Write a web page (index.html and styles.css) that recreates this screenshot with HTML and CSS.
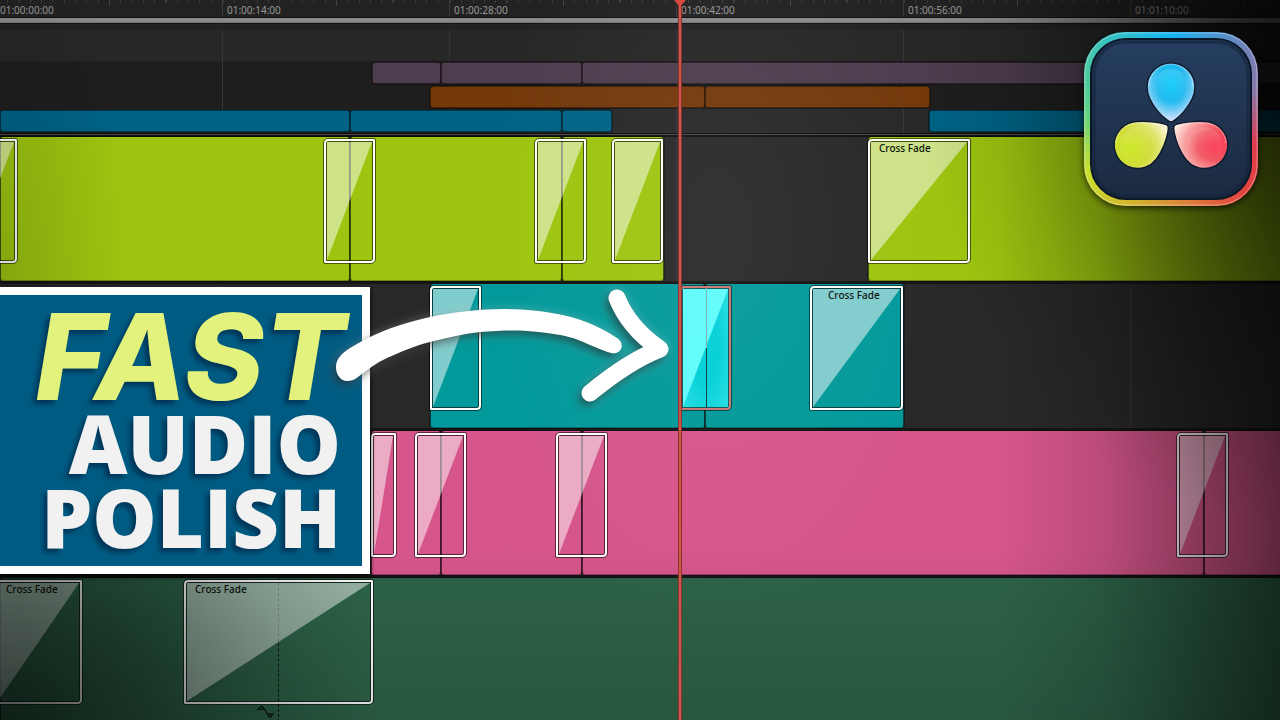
FILE: index.html
```html
<!DOCTYPE html>
<html lang="en">
<head>
  <meta charset="UTF-8">
  <meta name="viewport" content="width=device-width, initial-scale=1.0">
  <title>Fast Audio Polish</title>
  <link rel="stylesheet" href="styles.css">
</head>
<body>

<main class="timeline">

  <header class="ruler">
    <time>01:00:00:00</time>
    <time>01:00:14:00</time>
    <time>01:00:28:00</time>
    <time>01:00:42:00</time>
    <time>01:00:56:00</time>
    <time>01:01:10:00</time>
  </header>
  <div class="scrollbar"></div>

  <!-- Video tracks, --w is the clip length in timeline units -->
  <section class="video">
    <div class="track spacer"></div>
    <div class="track dark">
      <div class="gap" style="--w:372"></div>
      <div class="clip purple" style="--w:69"></div>
      <div class="clip purple" style="--w:141"></div>
      <div class="clip purple" style="--w:720"></div>
    </div>
    <div class="track dark">
      <div class="gap" style="--w:430"></div>
      <div class="clip orange" style="--w:275"></div>
      <div class="clip orange" style="--w:225"></div>
    </div>
    <div class="track">
      <div class="clip blue" style="--w:350"></div>
      <div class="clip blue" style="--w:212"></div>
      <div class="clip blue" style="--w:50"></div>
      <div class="gap" style="--w:317"></div>
      <div class="clip blue" style="--w:380"></div>
    </div>
  </section>
  <div class="divider"></div>

  <!-- Audio tracks, fades sit over the cuts at --x -->
  <section class="audio">
    <div class="track">
      <div class="clip lime" style="--w:350"></div>
      <div class="clip lime" style="--w:212"></div>
      <div class="clip lime" style="--w:102"></div>
      <div class="gap" style="--w:204"></div>
      <div class="clip lime" style="--w:440"></div>
      <div class="fade" style="--x:-34; --w:51"></div>
      <div class="fade" style="--x:324; --w:51"></div>
      <div class="fade" style="--x:535; --w:51"></div>
      <div class="fade" style="--x:612; --w:51"></div>
      <div class="fade" style="--x:868; --w:102"><span>Cross Fade</span></div>
    </div>
    <div class="track">
      <div class="gap" style="--w:430"></div>
      <div class="clip teal" style="--w:275"></div>
      <div class="clip teal" style="--w:199"></div>
      <div class="fade" style="--x:430; --w:51"></div>
      <div class="fade selected" style="--x:680; --w:51"></div>
      <div class="fade" style="--x:810; --w:93"><span class="inset">Cross Fade</span></div>
    </div>
    <div class="track">
      <div class="gap" style="--w:371"></div>
      <div class="clip pink" style="--w:70"></div>
      <div class="clip pink" style="--w:141"></div>
      <div class="clip pink" style="--w:622"></div>
      <div class="clip pink" style="--w:100"></div>
      <div class="fade" style="--x:371; --w:25"></div>
      <div class="fade" style="--x:415; --w:51"></div>
      <div class="fade" style="--x:556; --w:51"></div>
      <div class="fade" style="--x:1177; --w:51"></div>
    </div>
    <div class="track">
      <div class="clip green" style="--w:1300"></div>
      <div class="edit" style="--x:278"></div>
      <div class="fade" style="--x:-5; --w:87"><span>Cross Fade</span></div>
      <div class="fade" style="--x:184; --w:189"><span>Cross Fade</span></div>
      <svg class="keyframe" style="--x:257" width="18" height="14" viewBox="0 0 18 14" fill="none" stroke="#07130d" stroke-width="1.3">
        <path d="M0 5L3 3M6 3C9 4 9 9 12 10M15 10L17 8"/>
        <circle cx="4.5" cy="3" r="1.6"/><circle cx="13" cy="10.5" r="1.6"/>
      </svg>
    </div>
  </section>

  <div class="vignette"></div>
  <svg class="playhead" width="12" viewBox="0 0 12 720" preserveAspectRatio="xMidYMin slice" aria-hidden="true">
    <path d="M4.5 0V720M7.5 0V720" stroke="#4d1a18"/>
    <path d="M0 0H12L7.5 5V720H4.5V5Z" fill="#d8483e"/>
    <path d="M6 6V720" stroke="#b9685e"/>
  </svg>
</main>

<div class="card">
  <h1><em>FAST</em> AUDIO POLISH</h1>
</div>

<svg class="arrow" width="350" height="130" viewBox="330 280 350 130" aria-hidden="true">
  <path fill="#fff" d="M336 367C336 359 342 353 350 348C356 345 361 341 368 338C388 328 408 322 430 317C452 312 482 309 503 309C530 309 549 312 567 316C587 321 604 329 617 338C626 344 621 355 611 353C600 350 587 343 573 338C558 334 543 332 527 331C511 330 496 331 480 332C463 334 446 338 430 342C414 346 401 352 387 358C376 363 367 370 358 377C354 380 351 381 347 381C341 381 336 375 336 367Z"/>
  <path fill="none" stroke="#fff" stroke-width="17" stroke-linecap="round" stroke-linejoin="round" d="M617 298Q629 328 660 349Q629 361 590 393"/>
</svg>

<svg class="logo" width="176" height="176" viewBox="0 0 176 176" role="img" aria-label="DaVinci Resolve">
  <defs>
    <linearGradient id="panel" x2="0" y2="1">
      <stop offset="0" stop-color="#253e60"/><stop offset="1" stop-color="#1b2a40"/>
    </linearGradient>
    <radialGradient id="cyan" cx=".5" cy=".35" r=".68">
      <stop offset="0" stop-color="#05c9fa"/><stop offset=".45" stop-color="#1fb9ee"/><stop offset="1" stop-color="#f4e9ff"/>
    </radialGradient>
    <radialGradient id="yellow" cx=".3" cy=".55" r=".8">
      <stop offset="0" stop-color="#c9e81c"/><stop offset=".5" stop-color="#d2dc3a"/><stop offset="1" stop-color="#fff8e0"/>
    </radialGradient>
    <radialGradient id="red" cx=".76" cy=".5" r=".8">
      <stop offset="0" stop-color="#fa3350"/><stop offset=".4" stop-color="#f15660"/><stop offset="1" stop-color="#ffeae2"/>
    </radialGradient>
    <linearGradient id="shine" x2="0" y2="1">
      <stop offset="0" stop-color="#fff" stop-opacity=".15"/><stop offset="1" stop-color="#fff" stop-opacity="0"/>
    </linearGradient>
  </defs>
  <foreignObject x="1" y="1" width="174" height="174"><div class="ring"></div></foreignObject>
  <rect x="2" y="2" width="172" height="172" rx="40" fill="none" stroke="#fff" stroke-opacity=".35"/>
  <rect x="8" y="8" width="160" height="160" rx="35" fill="url(#panel)" stroke="#0b1727" stroke-width="2"/>
  <rect x="11" y="11" width="154" height="154" rx="32" fill="none" stroke="#142338" stroke-opacity=".6" stroke-width="3"/>
  <g stroke="#101c2e" stroke-width="1.5">
    <path fill="url(#cyan)" d="M88 91C84 91 64 73 64 56A24 24 0 0 1 112 56C112 73 92 91 88 91Z"/>
    <path fill="url(#yellow)" d="M85 95C87 99 79 131 63 136A23.5 23.5 0 1 1 50 91C62 89 83 92 85 95Z"/>
    <path fill="url(#red)" d="M91 95C89 99 97 131 113 136A23.5 23.5 0 1 0 126 91C114 89 93 92 91 95Z"/>
  </g>
  <g fill="none" stroke="#fff" stroke-opacity=".35">
    <path d="M66 55A22 22 0 0 1 110 55"/>
    <path d="M33 112A21 21 0 0 1 54 92Q68 91 83 95"/>
    <path d="M93 95Q107 91 122 92A21 21 0 0 1 143 112"/>
  </g>
  <g fill="url(#shine)">
    <circle cx="88" cy="56" r="18"/>
    <circle cx="55" cy="114" r="18"/>
    <circle cx="121" cy="114" r="18"/>
  </g>
</svg>

</body>
</html>
```
FILE: styles.css
```css
* { box-sizing: border-box; }
body { margin: 0; min-height: 100vh; position: relative; overflow: hidden; background: #242424; font-family: "Noto Sans", "Open Sans", sans-serif; }

/* timeline */
.timeline { --unit: calc(100vw / 1280); position: relative; min-height: 100vh; display: flex; flex-direction: column; overflow: hidden; }
.ruler { display: flex; height: 18px; margin-left: calc(-5 * var(--unit)); background: #222; border-bottom: 1px solid #111; }
.ruler time {
  flex: 0 0 calc(227 * var(--unit)); height: 17px; padding: 3px 0 0 4px; border-left: 1px solid #3a3a3a;
  color: #999; font-size: 10px; line-height: 14px;
  background:
    linear-gradient(#444, #444) 50% 0 / 1px 6px no-repeat,
    repeating-linear-gradient(90deg, #3a3a3a 0 1px, transparent 1px 5%) 0 0 / 100% 3px no-repeat;
}
.scrollbar { height: 5px; background: #8a8a8a; border-bottom: 1px solid #777; }
.video { border-top: 1px solid #111; }
.track {
  position: relative; display: flex; background-color: #282828;
  background-image: linear-gradient(90deg, #363636 1px, transparent 1px);
  background-size: calc(227 * var(--unit)) 100%; background-position-x: calc(-5 * var(--unit));
}
.track > * { flex: none; }
.gap, .clip { width: calc(var(--w) * var(--unit)); }
.video .track { height: 24px; padding: 1px 0; }
.video .spacer { height: 37px; background-color: #272727; border-top: 6px solid #222; }
.video .dark { background-color: #1e1e1e; }
.clip { border-radius: 3px; border: 1px solid rgba(0,0,0,.45); box-shadow: 0 0 0 1px rgba(0,0,0,.3); }
.purple { background: #4d3d4e; }
.orange { background: #73390b; }
.blue { background: #006385; }
.divider { height: 4px; background: #484b48; border-top: 1px solid #0c0c0c; border-bottom: 2px solid #111; }

.audio { flex: 1; background: #161616; }
.audio .track { height: 144px; margin-bottom: 3px; }
.audio .clip { border-color: rgba(0,0,0,.4) rgba(0,0,0,.6) rgba(0,0,0,.3) rgba(0,0,0,.6); border-top-width: 0; }
.lime { background: #9dc510; }
.teal { background: #02999a; }
.pink { background: #d6568b; }
.green { background: #2e6449; }

/* cross fades */
.fade { position: absolute; top: 2px; left: calc(var(--x) * var(--unit)); width: calc(var(--w) * var(--unit)); height: 124px; border: 2px solid #fff; border-radius: 4px 1px 4px 1px; outline: 1px solid rgba(0,0,0,.55); box-shadow: inset 0 0 0 1px rgba(0,0,0,.6); }
.fade::before { content: ""; position: absolute; inset: 1px; background: rgba(255,255,255,.5); clip-path: polygon(0 0, 100% 0, 0 100%); }
.fade span { position: relative; display: block; padding: 0 9px; color: #0b120a; font-size: 10px; line-height: 14px; font-weight: 500; white-space: nowrap; }
.fade .inset { padding-left: 16px; }
.selected { border-color: #cb7772; background: radial-gradient(#00cfd6 40%, #24e0e4); }
.selected::before { background: #5ffcfc; }
.selected::after { content: ""; position: absolute; top: 0; bottom: 0; left: 50%; width: 1px; background: linear-gradient(#7ab4b0 50%, #063c40 50%); }
.edit { position: absolute; top: 0; bottom: 0; left: calc(var(--x) * var(--unit)); border-left: 1px dashed #0b1a12; }
.keyframe { position: absolute; top: 127px; left: calc(var(--x) * var(--unit)); }

.playhead { position: absolute; top: 0; left: calc(680 * var(--unit)); height: 100%; margin-left: -6px; }
.vignette {
  position: absolute; inset: 0;
  background:
    radial-gradient(ellipse 18% 55% at 56% 32%, rgba(255,255,255,.06), transparent),
    radial-gradient(ellipse 28% 62% at 100% 10%, rgba(0,0,0,.65), rgba(0,0,0,.36) 35%, rgba(0,0,0,.1) 75%, transparent),
    linear-gradient(90deg, transparent 78%, rgba(0,0,0,.12) 86%, rgba(0,0,0,.56)),
    linear-gradient(transparent 75%, rgba(0,0,0,.14)),
    radial-gradient(ellipse 30% 50% at 0 100%, rgba(0,0,0,.65), rgba(0,0,0,.4) 40%, rgba(0,0,0,.1) 80%, transparent),
    radial-gradient(ellipse 10% 60% at 0 40%, rgba(0,0,0,.16), transparent);
}

/* title card */
.card { position: absolute; left: 0; top: 287px; width: 370px; padding: 13px 21px 12px 0; border: 8px solid #fff; border-left: 0; background: #005b82; box-shadow: 0 2px 5px #000; }
.card h1 { margin: 0; color: #f1f1f2; font: 800 81px/74px "Open Sans", sans-serif; text-align: right; text-shadow: -4px 4px 4px rgba(0,20,50,.5); }
.card em { display: block; margin-right: -4px; color: #e2f27c; font: italic 800 120px/98px Inter, "Open Sans", sans-serif; white-space: nowrap; }

.arrow { position: absolute; left: 330px; top: 280px; overflow: visible; filter: drop-shadow(-3px 4px 4px rgba(0,0,0,.5)) drop-shadow(0 0 5px rgba(255,255,255,.3)); }

/* app icon */
.logo { position: absolute; top: 31px; right: 21px; filter: drop-shadow(0 2px 3px rgba(0,0,0,.7)); }
.ring { width: 174px; height: 174px; border-radius: 41px; background: conic-gradient(#12b4f4, #6c84bd 12%, #8a78a8 20%, #e23a4c 30%, #e2453f 38%, #dd7a3c 46%, #d2b030 56%, #cbe02c 66%, #5fd283 76%, #43c6b0 86%, #12b4f4); }
```
